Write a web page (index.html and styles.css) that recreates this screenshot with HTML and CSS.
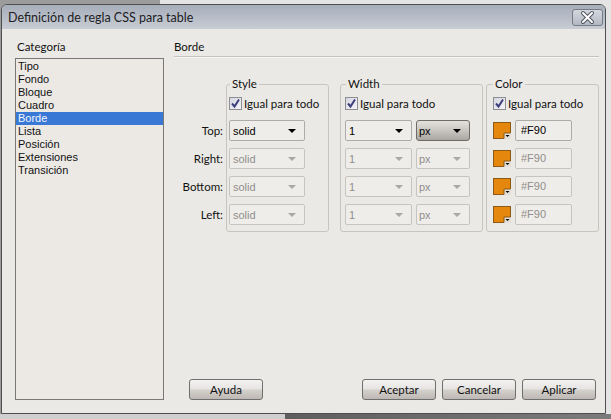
FILE: index.html
```html
<!DOCTYPE html>
<html lang="es">
<head>
<meta charset="utf-8">
<title>Definición de regla CSS para table</title>
<link rel="stylesheet" href="styles.css">
</head>
<body>
<div class="window">
  <div class="titlebar">
    <span class="title">Definición de regla CSS para table</span>
    <span class="close">
      <svg width="29" height="15" viewBox="0 0 29 15">
        <path d="M10 3 L19 12 M19 3 L10 12" stroke="#50555e" stroke-width="4" stroke-linecap="round"/>
        <path d="M10 3 L19 12 M19 3 L10 12" stroke="#ffffff" stroke-width="2" stroke-linecap="round"/>
      </svg>
    </span>
  </div>
  <div class="content">
    <div class="sidebar">
      <div class="side-label">Categoría</div>
      <ul class="cat-list">
        <li>Tipo</li>
        <li>Fondo</li>
        <li>Bloque</li>
        <li>Cuadro</li>
        <li class="selected">Borde</li>
        <li>Lista</li>
        <li>Posición</li>
        <li>Extensiones</li>
        <li>Transición</li>
      </ul>
    </div>
    <div class="main">
      <div class="section-title">Borde</div>
      <div class="groups">
        <div class="row-labels">
          <div class="row-label">Top:</div>
          <div class="row-label">Right:</div>
          <div class="row-label">Bottom:</div>
          <div class="row-label">Left:</div>
        </div>

        <fieldset class="group group-style">
          <legend>Style</legend>
          <div class="check"><span class="box"><svg width="11" height="11" viewBox="0 0 11 11"><path d="M2 5.5 L4.5 8.5 L9 1.5" fill="none" stroke="#3d3f7c" stroke-width="2"/></svg></span>Igual para todo</div>
          <div class="rows">
            <div class="select sel-style"><span class="val">solid</span><span class="arrow"></span></div>
            <div class="select sel-style disabled"><span class="val">solid</span><span class="arrow"></span></div>
            <div class="select sel-style disabled"><span class="val">solid</span><span class="arrow"></span></div>
            <div class="select sel-style disabled"><span class="val">solid</span><span class="arrow"></span></div>
          </div>
        </fieldset>

        <fieldset class="group group-width">
          <legend>Width</legend>
          <div class="check"><span class="box"><svg width="11" height="11" viewBox="0 0 11 11"><path d="M2 5.5 L4.5 8.5 L9 1.5" fill="none" stroke="#3d3f7c" stroke-width="2"/></svg></span>Igual para todo</div>
          <div class="rows">
            <div class="pair">
              <div class="select sel-num"><span class="val">1</span><span class="arrow"></span></div>
              <div class="select sel-unit pressed"><span class="val">px</span><span class="arrow"></span></div>
            </div>
            <div class="pair">
              <div class="select sel-num disabled"><span class="val">1</span><span class="arrow"></span></div>
              <div class="select sel-unit disabled"><span class="val">px</span><span class="arrow"></span></div>
            </div>
            <div class="pair">
              <div class="select sel-num disabled"><span class="val">1</span><span class="arrow"></span></div>
              <div class="select sel-unit disabled"><span class="val">px</span><span class="arrow"></span></div>
            </div>
            <div class="pair">
              <div class="select sel-num disabled"><span class="val">1</span><span class="arrow"></span></div>
              <div class="select sel-unit disabled"><span class="val">px</span><span class="arrow"></span></div>
            </div>
          </div>
        </fieldset>

        <fieldset class="group group-color">
          <legend>Color</legend>
          <div class="check"><span class="box"><svg width="11" height="11" viewBox="0 0 11 11"><path d="M2 5.5 L4.5 8.5 L9 1.5" fill="none" stroke="#3d3f7c" stroke-width="2"/></svg></span>Igual para todo</div>
          <div class="rows">
            <div class="pair color-pair">
              <svg class="swatch" width="18" height="17" viewBox="0 0 18 17"><rect x="0.5" y="0.5" width="17" height="16" fill="#e5870c" stroke="#8b5a16"/><rect x="11" y="11" width="7" height="6" fill="#e2dfda"/><path d="M11 11 H17.5 M11 11 V16.5" stroke="#8b5a16" stroke-width="1"/><path d="M12.5 13 H16.5 L14.5 15 Z" fill="#000"/></svg>
              <div class="text-input">#F90</div>
            </div>
            <div class="pair color-pair">
              <svg class="swatch" width="18" height="17" viewBox="0 0 18 17"><rect x="0.5" y="0.5" width="17" height="16" fill="#e5870c" stroke="#8b5a16"/><rect x="11" y="11" width="7" height="6" fill="#e2dfda"/><path d="M11 11 H17.5 M11 11 V16.5" stroke="#8b5a16" stroke-width="1"/><path d="M12.5 13 H16.5 L14.5 15 Z" fill="#000"/></svg>
              <div class="text-input disabled">#F90</div>
            </div>
            <div class="pair color-pair">
              <svg class="swatch" width="18" height="17" viewBox="0 0 18 17"><rect x="0.5" y="0.5" width="17" height="16" fill="#e5870c" stroke="#8b5a16"/><rect x="11" y="11" width="7" height="6" fill="#e2dfda"/><path d="M11 11 H17.5 M11 11 V16.5" stroke="#8b5a16" stroke-width="1"/><path d="M12.5 13 H16.5 L14.5 15 Z" fill="#000"/></svg>
              <div class="text-input disabled">#F90</div>
            </div>
            <div class="pair color-pair">
              <svg class="swatch" width="18" height="17" viewBox="0 0 18 17"><rect x="0.5" y="0.5" width="17" height="16" fill="#e5870c" stroke="#8b5a16"/><rect x="11" y="11" width="7" height="6" fill="#e2dfda"/><path d="M11 11 H17.5 M11 11 V16.5" stroke="#8b5a16" stroke-width="1"/><path d="M12.5 13 H16.5 L14.5 15 Z" fill="#000"/></svg>
              <div class="text-input disabled">#F90</div>
            </div>
          </div>
        </fieldset>
      </div>
      <div class="buttons">
        <button class="btn btn-help">Ayuda</button>
        <span class="spacer"></span>
        <button class="btn">Aceptar</button>
        <button class="btn">Cancelar</button>
        <button class="btn">Aplicar</button>
      </div>
    </div>
  </div>
</div>
<div class="taskstrip"></div>
</body>
</html>
```

FILE: styles.css
```css
html {
  background: linear-gradient(to right, #9c9c9c 0, #9c9c9c 160px, #e4e4e4 160px);
}
body {
  margin: 0;
  width: 611px;
  height: 419px;
  overflow: hidden;
  font-family: Lato, "Noto Sans", sans-serif;
  font-size: 11.5px;
  color: #111;
}
.window {
  box-sizing: border-box;
  width: 605px;
  height: 410px;
  margin: 4px 0 0 1px;
  border: 1px solid #4f4f4f;
  border-radius: 6px 6px 0 0;
  background: #ebe9e5;
  display: flex;
  flex-direction: column;
  overflow: hidden;
}
.titlebar {
  height: 24px;
  flex: none;
  display: flex;
  align-items: center;
  justify-content: space-between;
  padding: 0 2px 0 6px;
  background: linear-gradient(#a7aebb, #bdc3cc 70%, #c9cdd4);
}
.title {
  font-size: 12.5px;
  color: #1e2024;
}
.close {
  box-sizing: border-box;
  width: 31px;
  height: 17px;
  border: 1px solid #767c86;
  border-radius: 3px;
  background: linear-gradient(#d3d7de, #b3b9c3);
  display: flex;
  align-items: center;
  justify-content: center;
}
.content {
  flex: 1;
  display: flex;
  padding: 10px 6px 13px 13px;
  min-height: 0;
}
.sidebar {
  width: 149px;
  flex: none;
  display: flex;
  flex-direction: column;
  margin-right: 10px;
}
.side-label {
  line-height: 16px;
  padding-left: 2px;
  margin-bottom: 3px;
}
.cat-list {
  flex: 1;
  list-style: none;
  margin: 0;
  padding: 1px 0 0;
  border: 1px solid #7a7876;
  background: #ece9e5;
  font-family: "Liberation Sans", Arial, sans-serif;
  font-size: 11px;
}
.cat-list li {
  height: 13px;
  line-height: 13px;
  padding-left: 2px;
}
.cat-list li.selected {
  background: #3a78d6;
  color: #f2f6ff;
}
.main {
  flex: 1;
  display: flex;
  flex-direction: column;
}
.section-title {
  line-height: 16px;
  padding-bottom: 1px;
  border-bottom: 1px solid #c6c3be;
  box-shadow: 0 1px 0 #f7f6f4;
}
.groups {
  display: flex;
  margin-top: 19px;
  align-items: flex-start;
}
.row-labels {
  width: 49px;
  margin-right: 3px;
  padding-top: 44px;
  display: flex;
  flex-direction: column;
  gap: 7px;
  text-align: right;
}
.row-label {
  line-height: 21px;
  height: 21px;
}
.group {
  box-sizing: border-box;
  margin: 0;
  min-width: 0;
  border: 1px solid #c8c5c0;
  border-radius: 3px;
  padding: 0 2px 6px 2px;
}
.group legend {
  padding: 0 2px;
  margin-left: 1px;
  line-height: 16px;
}
.group-style {
  width: 103px;
}
.group-width {
  width: 143px;
  margin-left: 11px;
  padding-left: 4px;
}
.group-color {
  width: 113px;
  margin-left: 3px;
  padding-left: 6px;
}
.group-color legend {
  margin-left: 0;
}
.check {
  display: flex;
  align-items: center;
  height: 16px;
  margin: 3px 0 9px;
  white-space: nowrap;
}
.box {
  box-sizing: border-box;
  width: 13px;
  height: 13px;
  border: 1px solid #8d8e92;
  background: linear-gradient(135deg, #d6d6e2, #f4f4f8);
  margin-right: 2px;
  display: flex;
  align-items: center;
  justify-content: center;
}
.rows {
  display: flex;
  flex-direction: column;
  gap: 7px;
}
.pair {
  display: flex;
  gap: 4px;
  align-items: center;
}
.select {
  box-sizing: border-box;
  height: 21px;
  border: 1px solid #aeaca8;
  border-radius: 2px;
  background: #efede9;
  display: flex;
  align-items: center;
  justify-content: space-between;
  padding: 0 8px 0 3px;
  font-family: "Liberation Sans", Arial, sans-serif;
  font-size: 11px;
  color: #000;
}
.sel-style {
  width: 76px;
}
.sel-num {
  width: 67px;
}
.sel-unit {
  width: 54px;
  padding-left: 2px;
}
.arrow {
  width: 0;
  height: 0;
  border-left: 4px solid transparent;
  border-right: 4px solid transparent;
  border-top: 4px solid #000;
}
.select.disabled {
  color: #8f8e8c;
  border-color: #c6c4c0;
}
.select.disabled .arrow {
  border-top-color: #a9a8a6;
}
.select.pressed {
  border-color: #6d6b68;
  border-radius: 3px;
  background: linear-gradient(#e4e1dd, #c9c5c0 50%, #aaa6a1);
}
.color-pair {
  gap: 4px;
}
.swatch {
  display: block;
  flex: none;
}
.text-input {
  box-sizing: border-box;
  width: 57px;
  height: 21px;
  border: 1px solid #aeaca8;
  border-radius: 2px;
  background: #efede9;
  padding-left: 5px;
  line-height: 19px;
  font-family: "Liberation Sans", Arial, sans-serif;
  font-size: 11px;
  color: #000;
}
.text-input.disabled {
  color: #8f8e8c;
  border-color: #c6c4c0;
}
.buttons {
  margin-top: auto;
  display: flex;
  align-items: center;
  gap: 6px;
  padding: 0 3px 0 15px;
}
.spacer {
  flex: 1;
}
.btn {
  box-sizing: border-box;
  width: 74px;
  height: 21px;
  padding: 0;
  border: 1px solid #6f6f6f;
  border-radius: 3px;
  background: linear-gradient(#f3f2f1, #e7e5e3 45%, #d3cfca 55%, #bdb8b3);
  font-family: Lato, "Noto Sans", sans-serif;
  font-size: 11.5px;
  color: #111;
}
.taskstrip {
  height: 5px;
  background: linear-gradient(to right, #cfcfcf 0, #cfcfcf 285px, #5e5e5e 285px, #7b7b7b);
}
```
